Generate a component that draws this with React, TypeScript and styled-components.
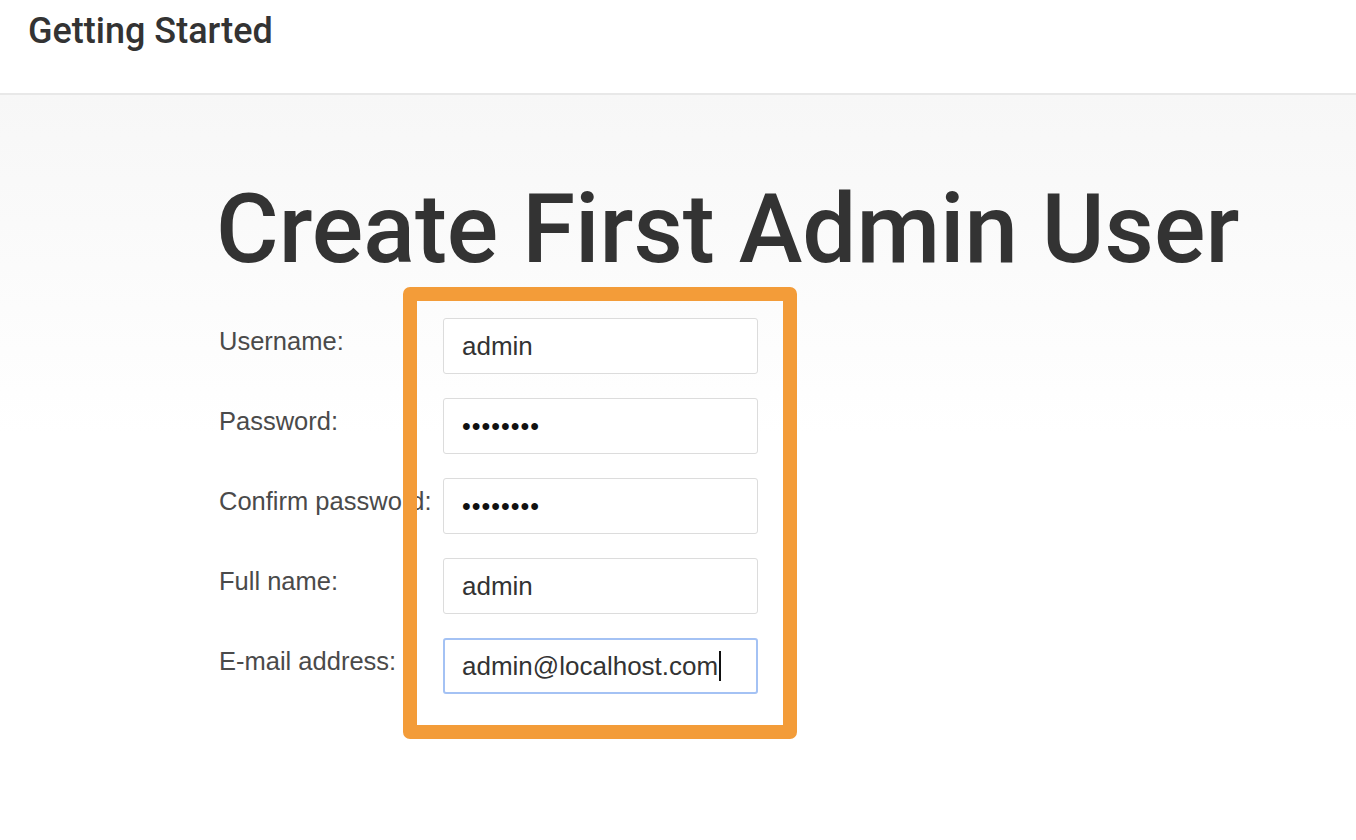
import React from "react";
import styled, { createGlobalStyle } from "styled-components";

const GlobalStyle = createGlobalStyle`
  html, body {
    margin: 0;
    padding: 0;
    background: #ffffff;
  }
  body {
    font-family: "Liberation Sans", Arial, sans-serif;
    color: #333333;
  }
  * {
    box-sizing: border-box;
  }
`;

const Page = styled.div`
  min-height: 840px;
  display: flex;
  flex-direction: column;
`;

const Header = styled.header`
  height: 95px;
  padding: 10px 0 0 28px;
  border-bottom: 2px solid #e8e8e8;
  background: #ffffff;
`;

const HeaderTitle = styled.h1`
  margin: 0;
  font-family: Roboto, "Noto Sans", sans-serif;
  font-weight: 500;
  font-size: 36px;
  color: #333333;
`;

const Main = styled.main`
  flex: 1;
  padding: 86px 0 0 216px;
  background: linear-gradient(180deg, #f7f7f7 0px, #ffffff 340px);
`;

const Title = styled.h2`
  margin: 0;
  font-family: Roboto, "Noto Sans", sans-serif;
  font-weight: 500;
  font-size: 96px;
  line-height: 97px;
  color: #333333;
  white-space: nowrap;
`;

const FormArea = styled.div`
  position: relative;
  margin-top: 40px;
  width: max-content;
`;

const FormGrid = styled.div`
  display: grid;
  grid-template-columns: 227px 315px;
  row-gap: 24px;
`;

const Label = styled.label`
  padding: 9px 0 0 3px;
  font-size: 25.5px;
  color: #4a4a4a;
  white-space: nowrap;
`;

const Field = styled.div<{ $focused?: boolean }>`
  height: 56px;
  display: flex;
  align-items: center;
  padding: 0 ${(p) => (p.$focused ? 17 : 18)}px;
  background: #ffffff;
  border: ${(p) => (p.$focused ? "2px solid #a4c2f4" : "1px solid #dcdcdc")};
  border-radius: 3px;
  font-size: 26px;
  color: #333333;
  white-space: nowrap;
`;

const Dots = styled.span`
  font-size: 25px;
  letter-spacing: 1px;
  color: #111111;
`;

const Caret = styled.span`
  display: inline-block;
  width: 2px;
  height: 30px;
  margin-left: 1px;
  background: #111111;
`;

/* orange annotation frame drawn over the form */
const Highlight = styled.div`
  position: absolute;
  left: 187px;
  top: -31px;
  width: 394px;
  height: 452px;
  border: 14px solid #f39c39;
  border-radius: 7px;
  pointer-events: none;
`;

type Row = { label: string; value: string; secret?: boolean; focused?: boolean };

const rows: Row[] = [
  { label: "Username:", value: "admin" },
  { label: "Password:", value: "admin123", secret: true },
  { label: "Confirm password:", value: "admin123", secret: true },
  { label: "Full name:", value: "admin" },
  { label: "E-mail address:", value: "admin@localhost.com", focused: true },
];

export default function App() {
  return (
    <>
      <GlobalStyle />
      <Page>
        <Header>
          <HeaderTitle>Getting Started</HeaderTitle>
        </Header>
        <Main>
          <Title>Create First Admin User</Title>
          <FormArea>
            <FormGrid>
              {rows.map((r) => (
                <React.Fragment key={r.label}>
                  <Label>{r.label}</Label>
                  <Field $focused={r.focused}>
                    {r.secret ? (
                      <Dots>{"•".repeat(r.value.length)}</Dots>
                    ) : (
                      <span>{r.value}</span>
                    )}
                    {r.focused && <Caret />}
                  </Field>
                </React.Fragment>
              ))}
            </FormGrid>
            <Highlight />
          </FormArea>
        </Main>
      </Page>
    </>
  );
}
